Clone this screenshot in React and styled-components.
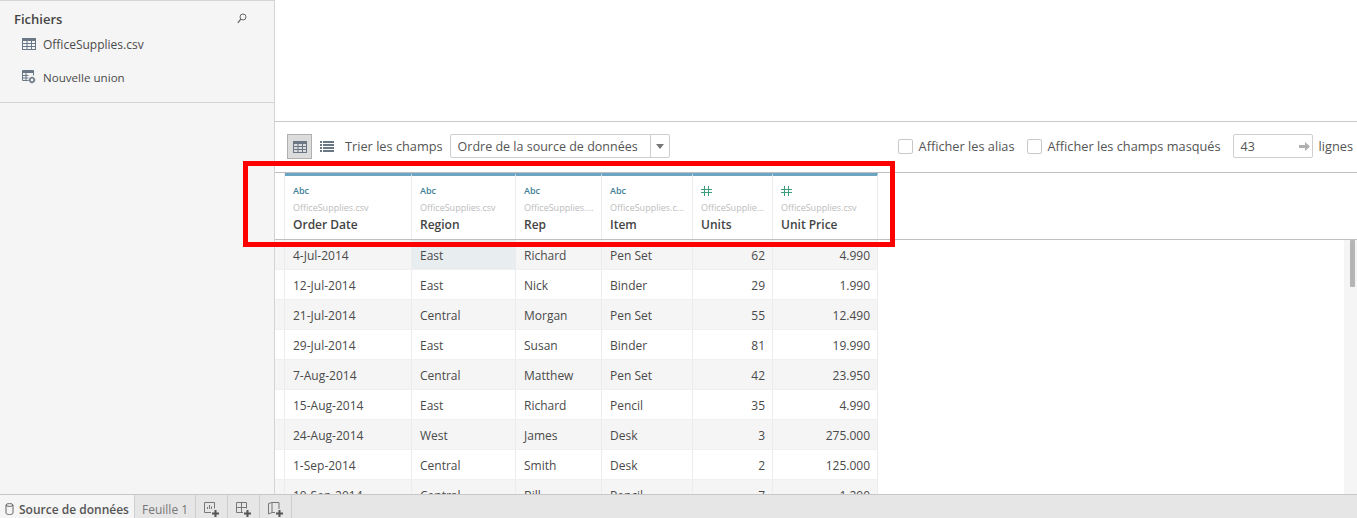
import styled, { createGlobalStyle } from 'styled-components';

const GlobalStyle = createGlobalStyle`
html, body {
    margin: 0;
    padding: 0;
    background: #fff;
    overflow: hidden;
}
body {
    font-family: "Open Sans", "Liberation Sans", sans-serif;
    color: #444;
}
`

const Page = styled.div`
width: 1357px;
height: 518px;
display: flex;
flex-flow: column;
position: relative;
overflow: hidden;
`

const Body = styled.div`
flex: 1;
min-height: 0;
display: flex;
`

const Sidebar = styled.aside`
width: 275px;
box-sizing: border-box;
flex: none;
background: #f5f5f5;
border-right: 1px solid #d4d4d4;
`

const FilesPanel = styled.div`
height: 103px;
box-sizing: border-box;
border-top: 1px solid #d4d4d4;
border-bottom: 1px solid #d4d4d4;
padding: 10px 27px 0 14px;
`

const FilesHead = styled.div`
display: flex;
justify-content: space-between;
align-items: center;
height: 15px;
font-size: 13px;
font-weight: 600;
color: #444;
`

const FileRow = styled.div`
display: flex;
align-items: center;
gap: 7px;
height: 16px;
margin: ${p => p.$top}px 0 0 8px;
font-size: ${p => p.$size}px;
color: #4a4a4a;
`

const Main = styled.main`
flex: 1;
min-width: 0;
display: flex;
flex-flow: column;
`

const Blank = styled.div`
flex: none;
border-bottom: 1px solid #c9c9c9;
box-sizing: border-box;
height: 122px;
`

const Toolbar = styled.div`
height: 51px;
flex: none;
box-sizing: border-box;
border-bottom: 1px solid #c0c0c0;
display: flex;
align-items: flex-start;
padding: 12px 0 0 12px;
font-size: 12.5px;
color: #555;
`

const ViewButton = styled.button`
width: 25px;
height: 25px;
box-sizing: border-box;
padding: 0;
display: flex;
align-items: center;
justify-content: center;
background: ${p => p.$active ? '#dcdcdc' : 'transparent'};
border: ${p => p.$active ? '1px solid #b0b0b0' : '1px solid transparent'};
margin-right: 2px;
`

const ToolLabel = styled.span`
font-size: 12.75px;
line-height: 24px;
margin: ${p => p.$margin || '0'};
white-space: nowrap;
`

const SortSelect = styled.div`
width: 220px;
height: 24px;
box-sizing: border-box;
border: 1px solid #cfcfcf;
border-radius: 2px;
display: flex;
align-items: center;
margin: 0 0 0 7px;
color: #555;
`

const SelectText = styled.span`
flex: 1;
padding-left: 7px;
`

const SelectArrow = styled.span`
width: 18px;
height: 22px;
border-left: 1px solid #cfcfcf;
display: flex;
align-items: center;
justify-content: center;
&::after {
    content: "";
    border: 4px solid transparent;
    border-top: 5px solid #777;
    border-bottom: 0;
}
`

const ToolRight = styled.div`
margin-left: auto;
display: flex;
align-items: flex-start;
padding-right: 4px;
`

const CheckBox = styled.span`
width: 15px;
height: 15px;
box-sizing: border-box;
border: 1px solid #c8c8c8;
border-radius: 2px;
margin: 5px 6px 0 ${p => p.$left}px;
`

const RowsInput = styled.div`
width: 80px;
height: 24px;
box-sizing: border-box;
border: 1px solid #cfcfcf;
border-radius: 2px;
display: flex;
align-items: center;
justify-content: space-between;
padding: 0 2px 0 7px;
margin: 0 6px 0 12px;
`

const Grid = styled.div`
flex: 1;
min-height: 0;
overflow: hidden;
position: relative;
`

const HeaderRow = styled.div`
display: flex;
height: 67px;
box-sizing: border-box;
border-bottom: 1px solid #c0c0c0;
`

const Stub = styled.div`
width: 9px;
flex: none;
border-right: 1px solid #ececec;
box-sizing: content-box;
`

const HeaderCell = styled.div`
width: ${p => p.$width}px;
flex: none;
box-sizing: border-box;
border-top: 3px solid #6ca5c4;
border-right: 1px solid #ececec;
padding: 0 7px 0 8px;
display: flex;
flex-flow: column;
`

const TypeIcon = styled.div`
height: 12px;
margin-top: 9px;
font-size: 9px;
line-height: 12px;
font-weight: 600;
color: #3f7f97;
display: flex;
align-items: center;
`

const SourceName = styled.div`
margin-top: 4px;
height: 14px;
font-size: 9px;
line-height: 14px;
color: #bcbcbc;
white-space: nowrap;
overflow: hidden;
text-overflow: ellipsis;
`

const FieldName = styled.div`
margin-top: 1px;
font-size: 12px;
line-height: 18px;
font-weight: 600;
color: #444;
white-space: nowrap;
`

const DataRow = styled.div`
display: flex;
height: 30px;
box-sizing: border-box;
border-bottom: 1px solid #f0f0f0;
background: ${p => p.$odd ? '#f5f5f5' : '#fff'};
width: 603px;
`

const DataCell = styled.div`
width: ${p => p.$width}px;
flex: none;
box-sizing: border-box;
border-right: 1px solid #ececec;
padding: 0 7px 0 8px;
font-size: 12px;
line-height: 31px;
color: #4a4a4a;
white-space: nowrap;
text-align: ${p => p.$right ? 'right' : 'left'};
background: ${p => p.$picked ? '#e8edf0' : 'transparent'};
`

const ScrollTrack = styled.div`
position: absolute;
right: 0;
top: 67px;
bottom: 0;
width: 13px;
background: #f5f5f5;
`

const ScrollThumb = styled.div`
position: absolute;
right: 2px;
top: 0;
width: 5px;
height: 47px;
border-radius: 1px;
background: #b5b5b5;
`

const Highlight = styled.div`
position: absolute;
left: 243px;
top: 161px;
width: 652px;
height: 86px;
box-sizing: border-box;
border: 5px solid #fe0000;
pointer-events: none;
`

const TabBar = styled.footer`
height: 24px;
flex: none;
box-sizing: border-box;
background: #e6e6e6;
border-top: 1px solid #c8c8c8;
display: flex;
font-size: 12px;
`

const SourceTab = styled.div`
width: 135px;
background: #f5f5f5;
border-right: 1px solid #cfcfcf;
display: flex;
align-items: center;
gap: 5px;
padding: 5px 0 0 5px;
box-sizing: border-box;
font-weight: 600;
color: #555;
`

const SheetTab = styled.div`
width: 61px;
box-sizing: border-box;
border-right: 1px solid #cfcfcf;
padding-left: 7px;
line-height: 29px;
color: #777;
`

const NewTab = styled.div`
width: 32px;
box-sizing: border-box;
border-right: 1px solid #cfcfcf;
padding-top: 4px;
display: flex;
align-items: center;
justify-content: center;
`

const columns = [
    { name: 'Order Date', width: 127, type: 'abc', source: 'OfficeSupplies.csv' },
    { name: 'Region', width: 104, type: 'abc', source: 'OfficeSupplies.csv' },
    { name: 'Rep', width: 86, type: 'abc', source: 'OfficeSupplies.csv' },
    { name: 'Item', width: 91, type: 'abc', source: 'OfficeSupplies.csv' },
    { name: 'Units', width: 80, type: 'num', source: 'OfficeSupplies.csv' },
    { name: 'Unit Price', width: 105, type: 'num', source: 'OfficeSupplies.csv' },
];

const rows = [
    ['4-Jul-2014', 'East', 'Richard', 'Pen Set', '62', '4.990'],
    ['12-Jul-2014', 'East', 'Nick', 'Binder', '29', '1.990'],
    ['21-Jul-2014', 'Central', 'Morgan', 'Pen Set', '55', '12.490'],
    ['29-Jul-2014', 'East', 'Susan', 'Binder', '81', '19.990'],
    ['7-Aug-2014', 'Central', 'Matthew', 'Pen Set', '42', '23.950'],
    ['15-Aug-2014', 'East', 'Richard', 'Pencil', '35', '4.990'],
    ['24-Aug-2014', 'West', 'James', 'Desk', '3', '275.000'],
    ['1-Sep-2014', 'Central', 'Smith', 'Desk', '2', '125.000'],
    ['10-Sep-2014', 'Central', 'Bill', 'Pencil', '7', '1.290'],
];

function TableIcon() {
    return (
        <svg width="14" height="12" viewBox="0 0 14 12" fill="none" stroke="#6a7785" strokeWidth="1">
            <rect x="0.5" y="0.5" width="13" height="11" />
            <path d="M0.5 2h13" strokeWidth="2" />
            <path d="M0.5 5.5h13M0.5 8.5h13M5 3v8M9.5 3v8" />
        </svg>
    );
}

function UnionIcon() {
    return (
        <svg width="14" height="14" viewBox="0 0 14 14" fill="none" stroke="#6a7785" strokeWidth="1">
            <path d="M6.5 10.5H0.5V0.5h11v5" />
            <path d="M0.5 2h11" strokeWidth="2" />
            <path d="M0.5 5.5h6M0.5 8h6M4 3v7" />
            <circle cx="10" cy="10" r="2.2" strokeWidth="1.6" />
            <path d="M10 6.6v1M10 12.4v1M6.6 10h1M12.4 10h1" />
        </svg>
    );
}

function SearchIcon() {
    return (
        <svg width="10" height="11" viewBox="0 0 10 11" fill="none" stroke="#666" strokeWidth="1">
            <circle cx="6" cy="4" r="3" />
            <path d="M3.8 6.2L0.8 9.8" strokeWidth="1.3" />
        </svg>
    );
}

function ListIcon() {
    return (
        <svg width="14" height="11" viewBox="0 0 14 11" fill="none" stroke="#6a7785" strokeWidth="2">
            <path d="M0 1h2M3 1h11M0 4h2M3 4h11M0 7h2M3 7h11M0 10h2M3 10h11" />
        </svg>
    );
}

function HashIcon() {
    return (
        <svg width="11" height="10" viewBox="0 0 11 10" fill="none" stroke="#3f9d7b" strokeWidth="1">
            <path d="M0 3.5h11M0 6.5h11M3.5 0v10M7.5 0v10" />
        </svg>
    );
}

function CylinderIcon() {
    return (
        <svg width="9" height="12" viewBox="0 0 9 12" fill="none" stroke="#666" strokeWidth="1">
            <path d="M1 2v8c0 2 7 2 7 0V2" />
            <ellipse cx="4.5" cy="2" rx="3.5" ry="1.4" />
        </svg>
    );
}

function Plus() {
    return <path d="M11.5 9v7M8 12.5h7" stroke="#555" strokeWidth="2" />;
}

function NewSheetIcon() {
    return (
        <svg width="16" height="16" viewBox="0 0 16 16" fill="none" stroke="#777" strokeWidth="1">
            <path d="M7 11.5H0.5V1.5h10v6" />
            <path d="M3.5 8V6M5.5 8V4M7.5 8V5.5" />
            <Plus />
        </svg>
    );
}

function NewDashIcon() {
    return (
        <svg width="16" height="16" viewBox="0 0 16 16" fill="none" stroke="#777" strokeWidth="1">
            <path d="M7 11.5H0.5V1.5h10v6M0.5 6.5h10M5.5 1.5v10" />
            <Plus />
        </svg>
    );
}

function NewStoryIcon() {
    return (
        <svg width="16" height="16" viewBox="0 0 16 16" fill="none" stroke="#777" strokeWidth="1">
            <path d="M7 11.5H4L0.5 13V2.5L4 1.5H11V8M4 1.5v10" />
            <Plus />
        </svg>
    );
}

function ArrowIcon() {
    return (
        <svg width="11" height="9" viewBox="0 0 11 9" fill="#b0b0b0">
            <path d="M0 3h6V0l5 4.5L6 9V6H0z" />
        </svg>
    );
}

function App() {
    return (
        <Page>
            <GlobalStyle />
            <Body>
                <Sidebar>
                    <FilesPanel>
                        <FilesHead>Fichiers<SearchIcon /></FilesHead>
                        <FileRow $top={10} $size={12}><TableIcon />OfficeSupplies.csv</FileRow>
                        <FileRow $top={17} $size={11.6}><UnionIcon />Nouvelle union</FileRow>
                    </FilesPanel>
                </Sidebar>
                <Main>
                    <Blank />
                    <Toolbar>
                        <ViewButton $active><TableIcon /></ViewButton>
                        <ViewButton><ListIcon /></ViewButton>
                        <ToolLabel $margin="0 0 0 4px">Trier les champs</ToolLabel>
                        <SortSelect>
                            <SelectText>Ordre de la source de données</SelectText>
                            <SelectArrow />
                        </SortSelect>
                        <ToolRight>
                            <CheckBox $left={0} />
                            <ToolLabel>Afficher les alias</ToolLabel>
                            <CheckBox $left={12} />
                            <ToolLabel>Afficher les champs masqués</ToolLabel>
                            <RowsInput>43<ArrowIcon /></RowsInput>
                            <ToolLabel>lignes</ToolLabel>
                        </ToolRight>
                    </Toolbar>
                    <Grid>
                        <HeaderRow>
                            <Stub />
                            {columns.map(col => (
                                <HeaderCell key={col.name} $width={col.width}>
                                    <TypeIcon>{col.type === 'abc' ? 'Abc' : <HashIcon />}</TypeIcon>
                                    <SourceName>{col.source}</SourceName>
                                    <FieldName>{col.name}</FieldName>
                                </HeaderCell>
                            ))}
                        </HeaderRow>
                        {rows.map((row, i) => (
                            <DataRow key={row[0]} $odd={i % 2 === 0}>
                                <Stub />
                                {row.map((value, c) => (
                                    <DataCell
                                        key={columns[c].name}
                                        $width={columns[c].width}
                                        $right={c > 3}
                                        $picked={i === 0 && c === 1}
                                    >
                                        {value}
                                    </DataCell>
                                ))}
                            </DataRow>
                        ))}
                        <ScrollTrack><ScrollThumb /></ScrollTrack>
                    </Grid>
                </Main>
            </Body>
            <TabBar>
                <SourceTab><CylinderIcon />Source de données</SourceTab>
                <SheetTab>Feuille 1</SheetTab>
                <NewTab><NewSheetIcon /></NewTab>
                <NewTab><NewDashIcon /></NewTab>
                <NewTab><NewStoryIcon /></NewTab>
            </TabBar>
            <Highlight />
        </Page>
    );
}

export default App
